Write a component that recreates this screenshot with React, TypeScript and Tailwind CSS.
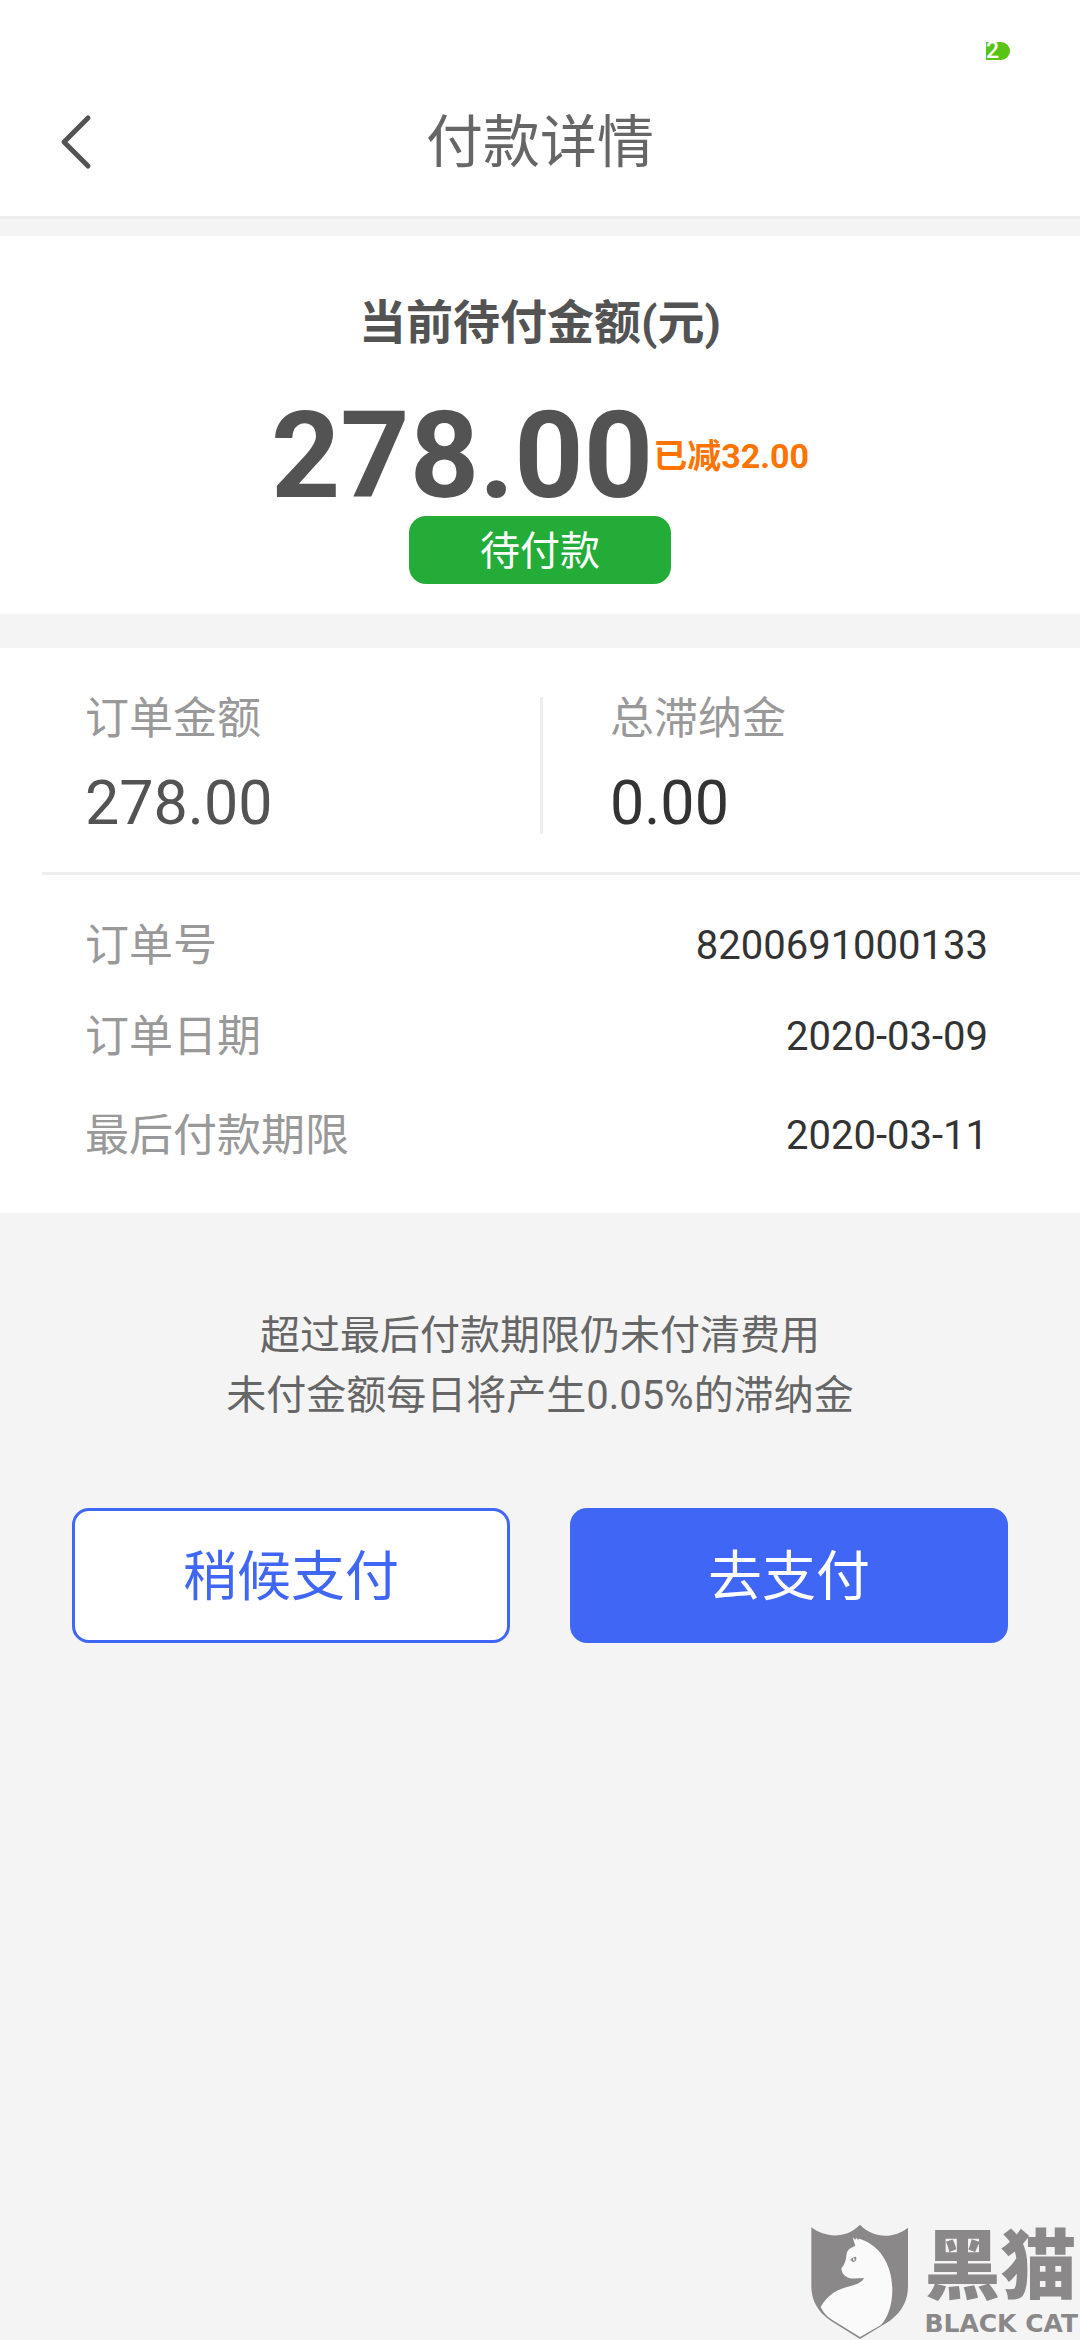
const details = [
  { label: "订单号", value: "8200691000133", row: "h-[90px]" },
  { label: "订单日期", value: "2020-03-09", row: "h-[92px]" },
  { label: "最后付款期限", value: "2020-03-11", row: "h-[106px]" },
];

const StatusBar = () => (
  <div className="flex h-[66px] items-end justify-end pr-[70px] pb-[6px]">
    <span className="h-[18px] w-6 rounded-r-full rounded-l-lg bg-[#58c516] text-[23px] leading-[18px] font-medium text-white">
      2
    </span>
  </div>
);

const Header = () => (
  <header className="border-b-[3px] border-[#eeeeee] bg-white">
    <StatusBar />
    <div className="grid h-[150px] grid-cols-[1fr_auto_1fr] items-center pt-[2px]">
      <button type="button" aria-label="返回" className="justify-self-start pl-[60px]">
        <svg width="32" height="56" viewBox="0 0 32 56" fill="none" stroke="#535353" strokeWidth="5" strokeLinecap="round" strokeLinejoin="round">
          <path d="M28 4 4 28l24 24" />
        </svg>
      </button>
      <h1 className="pt-[2px] text-[57px] leading-[84px] text-[#666666]">付款详情</h1>
    </div>
  </header>
);

const AmountDue = () => (
  <section className="mt-[17px] flex flex-col items-center bg-white pt-[52px] pb-[30px] text-[#535353]">
    <h2 className="text-[47px] leading-[70px] font-bold">当前待付金额(元)</h2>
    <p className="mt-[38px] flex items-center font-bold">
      <span className="text-[121px] leading-[120px]">278.00</span>
      <span className="text-[34px] leading-[50px] text-[#ff7300]">已减32.00</span>
    </p>
    <span className="flex h-[68px] w-[262px] items-center justify-center rounded-[17px] bg-[#23ac38] pt-1 text-[40px] text-white">
      待付款
    </span>
  </section>
);

const Amount = ({ label, value, className }: { label: string; value: string; className: string }) => (
  <div className={className}>
    <div className="text-[44px] leading-[64px] text-[#999999]">{label}</div>
    <div className="mt-4 text-[61px] leading-[72px]">{value}</div>
  </div>
);

const OrderInfo = () => (
  <section className="mt-[34px] bg-white pb-6">
    <div className="grid grid-cols-2 pt-[39px] pb-[33px]">
      <Amount label="订单金额" value="278.00" className="pl-[85px] text-[#535353]" />
      <div className="flex">
        <div className="mt-[10px] mb-[5px] w-[3px] bg-[#eeeeee]" />
        <Amount label="总滞纳金" value="0.00" className="pl-[67px] text-[#333333]" />
      </div>
    </div>
    <dl className="ml-[42px] border-t-[3px] border-[#eeeeee] pt-[26px] pr-[92px] pl-[43px]">
      {details.map(({ label, value, row }) => (
        <div key={label} className={`flex items-center justify-between ${row}`}>
          <dt className="text-[44px] leading-[64px] text-[#999999]">{label}</dt>
          <dd className="text-[40px] leading-[60px] text-[#333333]">{value}</dd>
        </div>
      ))}
    </dl>
  </section>
);

const BlackCat = () => (
  <footer className="mt-auto flex items-end self-end pr-[2px] text-[#8b8889]">
    <svg width="100" height="117" viewBox="60 70 300 351">
      <path fill="currentColor" d="M64 83c42 32 104 35 146-8 42 43 102 42 144 9v176c0 42-18 76-54 103l-90 55-88-55c-38-26-58-60-58-104z" />
      <path fill="#fafafa" d="M188 113l8 7 3-6 5 6 4-3c60 18 99 76 99 155 0 50-17 86-34 104l-63 36-84-52c-15-9-27-22-34-38 20-37 53-55 90-63 21-5 34-12 40-24-16 0-31 4-47-1-12-4-20-14-21-28 10-12 14-24 15-38 2-17 9-22 27-29z" />
      <path fill="currentColor" d="M181 181c2-5 8-9 17-10 3 8 0 14-8 17-4-4-6-5-9-7z" />
      <path fill="#fafafa" d="M191 174c4 2 4 8 1 11-3-3-4-7-1-11z" />
    </svg>
    <div className="ml-[14px] flex flex-col pb-[2px]">
      <span className="mb-3 font-['Noto_Sans_CJK_SC',sans-serif] text-[76px] leading-[76px] font-black">黑猫</span>
      <span className="font-['DejaVu_Sans',sans-serif] text-[25px] leading-7 font-bold">BLACK CAT</span>
    </div>
  </footer>
);

const App = () => {
  return (
    <div className="flex min-h-screen flex-col bg-[#f4f4f4] font-[Roboto,'Noto_Sans_CJK_SC',sans-serif]">
      <Header />
      <main>
        <AmountDue />
        <OrderInfo />
        <p className="mt-[93px] text-center text-[40px] leading-[60px] text-[#666666]">
          超过最后付款期限仍未付清费用
          <br />
          未付金额每日将产生0.05%的滞纳金
        </p>
        <div className="mt-[82px] grid grid-cols-2 gap-[60px] px-[72px] text-[54px]">
          <button type="button" className="h-[135px] rounded-[17px] border-[3px] border-[#3f66f5] bg-white pt-1 text-[#3f66f5]">
            稍候支付
          </button>
          <button type="button" className="h-[135px] rounded-[17px] bg-[#3f66f5] pt-1 text-white">
            去支付
          </button>
        </div>
      </main>
      <BlackCat />
    </div>
  );
};

export default App;
